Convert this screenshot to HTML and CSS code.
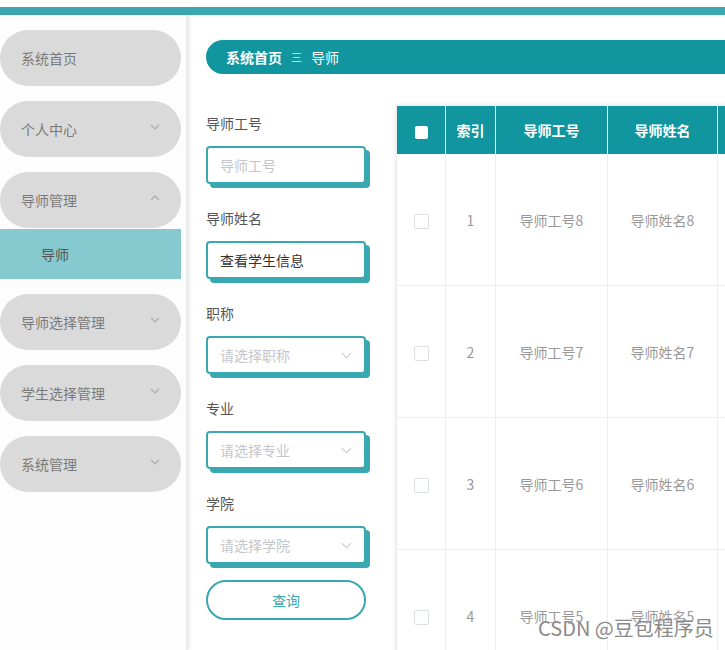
FILE: index.html
```html
<!DOCTYPE html>
<html lang="zh-CN">
<head>
<meta charset="utf-8">
<title>导师</title>
<link rel="stylesheet" href="styles.css">
</head>
<body>
<div class="topline"></div>
<div class="layout">
  <aside class="sidebar">
    <div class="pill">系统首页</div>
    <div class="pill">个人中心<svg class="chev" viewBox="0 0 10 6"><path d="M1 1l4 4 4-4"/></svg></div>
    <div class="group">
      <div class="pill">导师管理<svg class="chev" viewBox="0 0 10 6"><path d="M1 5l4-4 4 4"/></svg></div>
      <div class="sub">导师</div>
    </div>
    <div class="pill">导师选择管理<svg class="chev" viewBox="0 0 10 6"><path d="M1 1l4 4 4-4"/></svg></div>
    <div class="pill">学生选择管理<svg class="chev" viewBox="0 0 10 6"><path d="M1 1l4 4 4-4"/></svg></div>
    <div class="pill">系统管理<svg class="chev" viewBox="0 0 10 6"><path d="M1 1l4 4 4-4"/></svg></div>
  </aside>
  <main class="main">
    <div class="crumb"><b>系统首页</b><span class="sep">三</span><span>导师</span></div>
    <div class="content">
      <form class="search">
        <label class="lbl">导师工号</label>
        <div class="field"><span class="ph">导师工号</span></div>
        <label class="lbl">导师姓名</label>
        <div class="field"><span class="val">查看学生信息</span></div>
        <label class="lbl">职称</label>
        <div class="field"><span class="ph">请选择职称</span><svg class="schev" viewBox="0 0 12 7"><path d="M1 1l5 5 5-5"/></svg></div>
        <label class="lbl">专业</label>
        <div class="field"><span class="ph">请选择专业</span><svg class="schev" viewBox="0 0 12 7"><path d="M1 1l5 5 5-5"/></svg></div>
        <label class="lbl">学院</label>
        <div class="field"><span class="ph">请选择学院</span><svg class="schev" viewBox="0 0 12 7"><path d="M1 1l5 5 5-5"/></svg></div>
        <div class="btn">查询</div>
      </form>
      <div class="tablewrap">
        <table class="grid">
          <thead>
            <tr>
              <th class="c0"><span class="hbox"></span></th>
              <th class="c1">索引</th>
              <th class="c2">导师工号</th>
              <th class="c3">导师姓名</th>
              <th class="c4"></th>
            </tr>
          </thead>
          <tbody>
            <tr><td><span class="box"></span></td><td>1</td><td>导师工号8</td><td>导师姓名8</td><td></td></tr>
            <tr><td><span class="box"></span></td><td>2</td><td>导师工号7</td><td>导师姓名7</td><td></td></tr>
            <tr><td><span class="box"></span></td><td>3</td><td>导师工号6</td><td>导师姓名6</td><td></td></tr>
            <tr><td><span class="box"></span></td><td>4</td><td>导师工号5</td><td>导师姓名5</td><td></td></tr>
          </tbody>
        </table>
      </div>
    </div>
  </main>
</div>
<div class="watermark">CSDN @豆包程序员</div>
</body>
</html>
```
FILE: styles.css
```css
html, body {
  margin: 0;
  padding: 0;
  background: #fff;
  overflow: hidden;
  width: 725px;
  height: 650px;
}
body {
  font-family: "Noto Sans CJK SC", "Noto Sans", sans-serif;
  font-size: 14px;
  color: #666;
  position: relative;
}
.topline {
  margin-top: 7px;
  height: 8px;
  background: #3aa8b1;
}
.layout {
  display: flex;
  height: 635px;
}
.sidebar {
  width: 188px;
  flex: none;
  background: #fdfdfd;
  box-shadow: 2px 0 3px rgba(0,0,0,0.08);
  border-right: 2px solid #ececec;
  box-sizing: border-box;
  padding-top: 15px;
  display: flex;
  flex-direction: column;
  gap: 15px;
  position: relative;
  z-index: 1;
}
.pill {
  width: 181px;
  height: 56px;
  box-sizing: border-box;
  border-radius: 28px;
  background: #dadada;
  color: #7a7a7a;
  padding-left: 21px;
  display: flex;
  align-items: center;
  justify-content: space-between;
  padding-right: 21px;
}
.chev {
  width: 10px;
  height: 6px;
  fill: none;
  stroke: #aaa;
  stroke-width: 1.1;
  margin-top: -4px;
}
.group {
  display: flex;
  flex-direction: column;
  gap: 1px;
}
.sub {
  width: 181px;
  height: 50px;
  background: #86c9cf;
  color: #555;
  padding-left: 41px;
  box-sizing: border-box;
  display: flex;
  align-items: center;
}
.main {
  flex: 1;
  min-width: 0;
  padding: 25px 0 0 18px;
  background: #fff;
}
.crumb {
  height: 34px;
  border-radius: 17px 0 0 17px;
  background: #1196a0;
  color: #fff;
  display: flex;
  align-items: center;
  padding-left: 20px;
  white-space: nowrap;
}
.crumb b {
  font-weight: 700;
}
.crumb .sep {
  margin: 0 9px 0 9px;
  font-size: 11px;
  opacity: 0.85;
}
.content {
  display: flex;
  margin-top: 32px;
  gap: 25px;
}
.search {
  width: 166px;
  flex: none;
  display: flex;
  flex-direction: column;
  padding-top: 7px;
  margin: 0;
}
.lbl {
  height: 20px;
  line-height: 20px;
  color: #555;
  margin-bottom: 13px;
}
.field {
  width: 160px;
  height: 38px;
  box-sizing: border-box;
  border: 2px solid #3aa8b1;
  border-radius: 4px;
  box-shadow: 4px 4px 0 #3aa8b1;
  background: #fff;
  margin-bottom: 24px;
  display: flex;
  align-items: center;
  justify-content: space-between;
  padding: 0 12px;
}
.ph {
  color: #c3c6cc;
}
.val {
  color: #333;
}
.schev {
  width: 11px;
  height: 7px;
  fill: none;
  stroke: #c3c6cc;
  stroke-width: 1.1;
}
.btn {
  margin-top: -8px;
  width: 160px;
  height: 40px;
  box-sizing: border-box;
  border: 2px solid #3aa8b1;
  border-radius: 20px;
  color: #3aa8b1;
  display: flex;
  align-items: center;
  justify-content: center;
}
.tablewrap {
  flex: none;
  box-shadow: 0 0 5px rgba(0,0,0,0.18);
  background: #fff;
}
.grid {
  border-collapse: collapse;
  table-layout: fixed;
  width: 427px;
}
.grid th {
  height: 48px;
  background: #1196a0;
  color: #fff;
  font-weight: 700;
  border-left: 1px solid #fff;
  padding: 0;
  text-align: center;
}
.grid th.c0 { border-left: none; }
.c0 { width: 48px; }
.c1 { width: 49px; }
.c2 { width: 111px; }
.c3 { width: 109px; }
.c4 { width: 110px; }
.grid td {
  height: 131px;
  border: 1px solid #ebeef5;
  border-top: none;
  text-align: center;
  color: #999;
  padding: 0;
}
.grid td:first-child { border-left: none; }
.box {
  display: inline-block;
  width: 13px;
  height: 13px;
  border: 1px solid #dcdfe6;
  border-radius: 2px;
  vertical-align: middle;
}
.hbox {
  display: inline-block;
  width: 13px;
  height: 13px;
  background: #fff;
  border-radius: 2px;
  vertical-align: middle;
}
.watermark {
  position: absolute;
  left: 538px;
  top: 613px;
  font-size: 20px;
  color: #8a8a8a;
  white-space: nowrap;
  text-shadow: 0 0 2px #fff;
}
```
